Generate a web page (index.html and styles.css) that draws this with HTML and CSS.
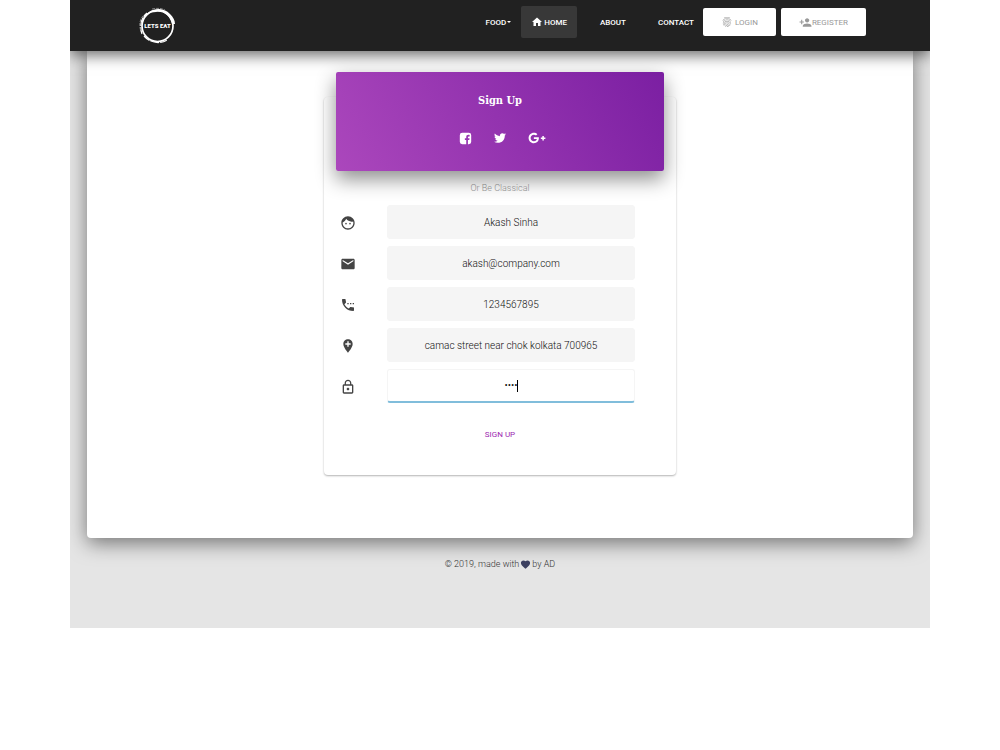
FILE: index.html
```
<!DOCTYPE html>
<html lang="en">
<head>
    <meta charset="UTF-8" />
    <meta name="viewport" content="width=device-width, initial-scale=1.0" />
    <title>Lets Eat - Sign Up</title>
    <link rel="stylesheet" href="styles.css">
</head>
<body>
    <div class="page">
        <header class="navbar">
            <a class="brand" href="#" aria-label="Lets Eat">
                <svg class="logo" viewBox="0 0 38 38">
                    <circle cx="19.500" cy="20" r="15.500" fill="none" stroke="#fff" stroke-width="1.700" />
                    <path d="M5 13C9 3 24-1 32 8c3 3 5 6 5 10h-3C32 10 26 5 18 6 11 6 8 9 5 13z" fill="#fff" />
                    <path d="M4 28C1 20 3 12 9 7M6 30c5 6 15 9 23 4" fill="none" stroke="#fff" stroke-width="1.200" stroke-dasharray="7 1 9 1" />
                    <path d="M2.500 24C1 18 2 13 5 10M14 3c5-1 9-1 13 1" fill="none" stroke="#888" stroke-width="1" stroke-dasharray="3 1" />
                    <text x="19.500" y="22" text-anchor="middle">LETS EAT</text>
                </svg>
            </a>
            <nav class="menu">
                <a class="nav-link" href="#">FOOD<span class="caret"></span></a>
                <a class="nav-link active" href="#">
                    <svg class="icon icon-sm" viewBox="0 0 24 24"><path d="M10 20v-6h4v6h5v-8h3L12 3 2 12h3v8z" /></svg>
                    HOME
                </a>
                <a class="nav-link plain" href="#">ABOUT</a>
                <a class="nav-link plain" href="#">CONTACT</a>
                <a class="nav-btn login" href="#">
                    <svg class="icon icon-sm" viewBox="0 0 24 24"><path d="M17.81 4.47c-.08 0-.16-.02-.23-.06C15.66 3.42 14 3 12.01 3c-1.98 0-3.86.47-5.57 1.41-.24.13-.54.04-.68-.2-.13-.24-.04-.55.2-.68C7.82 2.52 9.86 2 12.01 2c2.13 0 3.99.47 6.03 1.52.25.13.34.43.21.67-.09.18-.26.28-.44.28zM3.5 9.72c-.1 0-.2-.03-.29-.09-.23-.16-.28-.47-.12-.7.99-1.4 2.25-2.5 3.75-3.27C9.98 4.04 14 4.03 17.15 5.65c1.5.77 2.76 1.86 3.75 3.25.16.22.11.54-.12.7-.23.16-.54.11-.7-.12-.9-1.26-2.04-2.25-3.39-2.94-2.87-1.47-6.54-1.47-9.4.01-1.36.7-2.5 1.7-3.4 2.96-.08.14-.23.21-.39.21zm6.25 12.07c-.13 0-.26-.05-.35-.15-.87-.87-1.34-1.43-2.01-2.64-.69-1.23-1.05-2.73-1.05-4.34 0-2.97 2.54-5.39 5.66-5.39s5.66 2.42 5.66 5.39c0 .28-.22.5-.5.5s-.5-.22-.5-.5c0-2.42-2.09-4.39-4.66-4.39-2.57 0-4.66 1.97-4.66 4.39 0 1.44.32 2.77.93 3.85.64 1.15 1.08 1.64 1.85 2.42.19.2.19.51 0 .71-.11.1-.24.15-.37.15zm7.17-1.85c-1.19 0-2.24-.3-3.1-.89-1.49-1.01-2.38-2.65-2.38-4.39 0-.28.22-.5.5-.5s.5.22.5.5c0 1.41.72 2.74 1.94 3.56.71.48 1.54.71 2.54.71.24 0 .64-.03 1.04-.1.27-.05.53.13.58.41.05.27-.13.53-.41.58-.57.11-1.07.12-1.21.12zM14.91 22c-.04 0-.09-.01-.13-.02-1.59-.44-2.63-1.03-3.72-2.1-1.4-1.39-2.17-3.24-2.17-5.22 0-1.62 1.38-2.94 3.08-2.94 1.7 0 3.08 1.32 3.08 2.94 0 1.07.93 1.94 2.08 1.94s2.08-.87 2.08-1.94c0-3.77-3.25-6.83-7.25-6.83-2.84 0-5.44 1.58-6.61 4.03-.39.81-.59 1.76-.59 2.8 0 .78.07 2.01.67 3.61.1.26-.03.55-.29.64-.26.1-.55-.04-.64-.29-.49-1.31-.73-2.61-.73-3.96 0-1.2.23-2.29.68-3.24 1.33-2.79 4.28-4.6 7.51-4.6 4.55 0 8.25 3.51 8.25 7.83 0 1.62-1.38 2.94-3.08 2.94s-3.08-1.32-3.08-2.94c0-1.07-.93-1.94-2.08-1.94s-2.08.87-2.08 1.94c0 1.71.66 3.31 1.87 4.51.95.94 1.86 1.46 3.27 1.85.27.07.42.35.35.61-.05.23-.26.38-.47.38z" /></svg>
                    LOGIN
                </a>
                <a class="nav-btn register" href="#">
                    <svg class="icon icon-md" viewBox="0 0 24 24"><path d="M15 12c2.21 0 4-1.79 4-4s-1.79-4-4-4-4 1.79-4 4 1.79 4 4 4zm-9-2V7H4v3H1v2h3v3h2v-3h3v-2H6zm9 4c-2.67 0-8 1.34-8 4v2h16v-2c0-2.66-5.33-4-8-4z" /></svg>
                    REGISTER
                </a>
            </nav>
        </header>

        <main class="main">
            <form class="card">
                <div class="card-header">
                    <h4>Sign Up</h4>
                    <div class="social">
                        <a href="#" aria-label="Facebook"><svg class="icon icon-md" viewBox="0 0 16 16"><path d="M4 1h8a3 3 0 0 1 3 3v8a3 3 0 0 1-3 3h-1V9.800h1.700l.3-2.100H11V6.500c0-.7.3-1 1.100-1h1V3.600c-.3 0-.8-.1-1.500-.1-1.700 0-2.700.9-2.700 2.700v1.500H7.200v2.100h1.700V15H4a3 3 0 0 1-3-3V4a3 3 0 0 1 3-3z" /></svg></a>
                        <a href="#" aria-label="Twitter"><svg class="icon icon-sm" viewBox="0 0 512 512"><path d="M459.37 151.716c.325 4.548.325 9.097.325 13.645 0 138.72-105.583 298.558-298.558 298.558-59.452 0-114.68-17.219-161.137-47.106 8.447.974 16.568 1.299 25.34 1.299 49.055 0 94.213-16.568 130.274-44.832-46.132-.975-84.792-31.188-98.112-72.772 6.498.974 12.995 1.624 19.818 1.624 9.421 0 18.843-1.3 27.614-3.573-48.081-9.747-84.143-51.98-84.143-102.985v-1.299c13.969 7.797 30.214 12.67 47.431 13.319-28.264-18.843-46.781-51.005-46.781-87.391 0-19.492 5.197-37.36 14.294-52.954 51.655 63.675 129.3 105.258 216.365 109.807-1.624-7.797-2.599-15.918-2.599-24.04 0-57.828 46.782-104.934 104.934-104.934 30.213 0 57.502 12.67 76.67 33.137 23.715-4.548 46.456-13.32 66.599-25.34-7.798 24.366-24.366 44.833-46.132 57.827 21.117-2.273 41.584-8.122 60.426-16.243-14.292 20.791-32.161 39.308-52.628 54.253z" /></svg></a>
                        <a href="#" aria-label="Google Plus"><svg class="icon icon-wide" viewBox="0 0 640 512"><path d="M386.061 228.496c1.834 9.692 3.143 19.384 3.143 31.956C389.204 370.205 315.599 448 204.8 448c-106.084 0-192-85.915-192-192s85.916-192 192-192c51.864 0 95.083 18.859 128.611 50.292l-52.126 50.03c-14.145-13.621-39.028-29.599-76.485-29.599-65.484 0-118.92 54.221-118.92 121.277 0 67.056 53.436 121.277 118.92 121.277 75.961 0 104.513-54.745 108.965-82.773H204.8v-66.009h181.261zm185.406 6.437V179.2h-56.001v55.733h-55.733v56.001h55.733v55.733h56.001v-55.733H627.2v-56.001h-55.733z" /></svg></a>
                    </div>
                </div>
                <p class="divider">Or Be Classical</p>
                <div class="fields">
                    <div class="field">
                        <label for="name" aria-label="Name"><svg class="icon icon-lg" viewBox="0 0 24 24"><path d="M9 11.750c-.69 0-1.250.56-1.250 1.250s.56 1.250 1.250 1.250 1.250-.56 1.250-1.250-.56-1.250-1.250-1.250zm6 0c-.69 0-1.250.56-1.250 1.250s.56 1.250 1.250 1.250 1.250-.56 1.250-1.250-.56-1.250-1.250-1.250zM12 2C6.480 2 2 6.480 2 12s4.480 10 10 10 10-4.480 10-10S17.520 2 12 2zm0 18c-4.410 0-8-3.590-8-8 0-.29.02-.58.05-.86 2.360-1.050 4.230-2.980 5.210-5.370C11.070 8.330 14.050 10 17.420 10c.78 0 1.530-.09 2.250-.26.21.71.33 1.470.33 2.260 0 4.410-3.590 8-8 8z" /></svg></label>
                        <input type="text" id="name" value="Akash Sinha">
                    </div>
                    <div class="field">
                        <label for="email" aria-label="Email"><svg class="icon icon-lg" viewBox="0 0 24 24"><path d="M20 4H4c-1.100 0-1.990.9-1.990 2L2 18c0 1.100.9 2 2 2h16c1.100 0 2-.9 2-2V6c0-1.100-.9-2-2-2zm0 4l-8 5-8-5V6l8 5 8-5v2z" /></svg></label>
                        <input type="email" id="email" value="akash@company.com">
                    </div>
                    <div class="field">
                        <label for="phone" aria-label="Phone"><svg class="icon icon-lg" viewBox="0 0 24 24"><path d="M13 9h-2v2h2V9zm4 0h-2v2h2V9zm3 6.500c-1.250 0-2.450-.2-3.570-.57-.35-.11-.74-.03-1.020.24l-2.200 2.200c-2.830-1.440-5.150-3.750-6.590-6.580l2.200-2.210c.28-.27.36-.66.25-1.010C8.700 6.450 8.500 5.250 8.500 4c0-.55-.45-1-1-1H4c-.55 0-1 .45-1 1 0 9.390 7.610 17 17 17 .55 0 1-.45 1-1v-3.500c0-.55-.45-1-1-1zM19 9v2h2V9h-2z" /></svg></label>
                        <input type="tel" id="phone" value="1234567895">
                    </div>
                    <div class="field">
                        <label for="address" aria-label="Address"><svg class="icon icon-lg" viewBox="0 0 24 24"><path d="M12 2C8.140 2 5 5.140 5 9c0 5.250 7 13 7 13s7-7.750 7-13c0-3.860-3.140-7-7-7zm4 8h-3v3h-2v-3H8V8h3V5h2v3h3v2z" /></svg></label>
                        <input type="text" id="address" value="camac street near chok kolkata 700965">
                    </div>
                    <div class="field">
                        <label for="password" aria-label="Password"><svg class="icon icon-lg" viewBox="0 0 24 24"><path d="M12 17c1.100 0 2-.9 2-2s-.9-2-2-2-2 .9-2 2 .9 2 2 2zm6-9h-1V6c0-2.760-2.240-5-5-5S7 3.240 7 6v2H6c-1.100 0-2 .9-2 2v10c0 1.100.9 2 2 2h12c1.100 0 2-.9 2-2V10c0-1.100-.9-2-2-2zM8.900 6c0-1.710 1.390-3.100 3.100-3.100s3.100 1.390 3.100 3.100v2H8.900V6zM18 20H6V10h12v10z" /></svg></label>
                        <div class="password-box">
                            <input type="password" id="password" class="focused" value="1234">
                            <span class="text-cursor"></span>
                        </div>
                    </div>
                </div>
                <button type="submit" class="submit">SIGN UP</button>
            </form>
        </main>

        <footer class="footer">
            © 2019, made with
            <svg class="icon icon-heart" viewBox="0 0 24 24"><path d="M12 21.350l-1.450-1.320C5.400 15.360 2 12.280 2 8.500 2 5.420 4.420 3 7.500 3c1.740 0 3.410.81 4.500 2.090C13.090 3.810 14.760 3 16.500 3 19.580 3 22 5.420 22 8.500c0 3.780-3.400 6.860-8.550 11.540L12 21.350z" /></svg>
            by AD
        </footer>
    </div>
</body>
</html>
```
FILE: styles.css
```
* {
    box-sizing: border-box;
}
body {
    margin: 0;
    background: #fff;
    font-family: Roboto, "Liberation Sans", sans-serif;
    font-size: 10px;
    font-weight: 300;
    color: #333;
}
a {
    color: inherit;
    text-decoration: none;
}
.page {
    width: 86%;
    margin: 0 auto;
    background: #e5e5e5;
    overflow: hidden;
}
.icon {
    display: block;
    flex: none;
    fill: currentColor;
}
.icon-sm { width: 12px; height: 12px; }
.icon-md { width: 13px; height: 13px; }
.icon-lg { width: 16px; height: 16px; }
.icon-wide { width: 18px; height: 14px; }
.icon-heart { width: 11px; height: 11px; color: #3c4060; }

/* navbar */
.navbar {
    position: relative;
    z-index: 1;
    display: flex;
    justify-content: space-between;
    padding: 6px 64px 7px 68px;
    background: #212121;
    color: #fff;
    box-shadow: 0 4px 14px rgba(0, 0, 0, 0.6);
}
.logo {
    display: block;
    width: 38px;
    height: 38px;
}
.logo text {
    fill: #fff;
    font-family: Roboto, sans-serif;
    font-size: 6px;
    font-weight: 900;
}
.menu {
    display: flex;
    align-items: flex-start;
    font-size: 8px;
    font-weight: 500;
}
.nav-link {
    display: flex;
    align-items: center;
    gap: 1px;
    height: 32px;
    padding: 0 10px;
    border-radius: 2px;
}
.nav-link.active {
    background: #383838;
}
.nav-link.plain {
    padding: 0 9px 0 23px;
}
.caret {
    border: 2px solid transparent;
    border-top-color: #fff;
    border-bottom: 0;
}
.nav-btn {
    display: flex;
    align-items: center;
    height: 28px;
    margin-top: 2px;
    padding: 0 18px;
    border-radius: 2px;
    background: #fff;
    color: #999;
    font-weight: 400;
}
.nav-btn.login {
    gap: 2px;
}
.nav-btn.register {
    margin-left: 5px;
}

/* sign up card */
.main {
    margin: 0 17px;
    padding: 46px 16px 63px;
    background: #fff;
    border-radius: 0 0 4px 4px;
    box-shadow: 0 5px 20px rgba(0, 0, 0, 0.5);
}
.card {
    width: 352px;
    max-width: 100%;
    margin: 0 auto;
    padding: 0 12px 30px;
    border-radius: 4px;
    background: #fff;
    box-shadow: 0 1px 2px rgba(0, 0, 0, 0.3);
    text-align: center;
}
.card-header {
    position: relative;
    top: -25px;
    height: 99px;
    margin-bottom: -25px;
    padding-top: 21px;
    border-radius: 2px;
    background: linear-gradient(60deg, #ab47bc, #7b1fa2);
    box-shadow: 0 8px 20px rgba(0, 0, 0, 0.45);
    color: #fff;
}
.card-header h4 {
    margin: 0;
    font-family: "Roboto Slab", "DejaVu Serif Condensed", "DejaVu Serif", serif;
    font-size: 11px;
    line-height: 15px;
    font-weight: 700;
}
.social {
    display: flex;
    justify-content: center;
    align-items: center;
    gap: 22px;
    margin-top: 23px;
    padding-left: 4px;
}
.divider {
    margin: 0;
    padding: 11px 0;
    font-size: 9px;
    line-height: 12px;
    color: #999;
}
.fields {
    display: grid;
    gap: 7px;
    padding: 0 29px 0 4px;
}
.field {
    display: flex;
    align-items: center;
    gap: 31px;
    color: #444;
}
.field label {
    padding-top: 2px;
}
.field input {
    flex: 1;
    min-width: 0;
    height: 34px;
    padding: 0 8px;
    border: 1px solid #f5f5f5;
    border-radius: 3px;
    background: #f5f5f5;
    color: #111;
    font: inherit;
    text-align: center;
    outline: none;
}
.field input.focused,
.field input:focus {
    background: #fff;
    border-bottom: 2px solid #80bddb;
}
.password-box {
    position: relative;
    display: flex;
    flex: 1;
}
.text-cursor {
    position: absolute;
    top: 11px;
    left: calc(50% + 6px);
    width: 1px;
    height: 12px;
    background: #000;
}
.submit {
    margin-top: 22px;
    padding: 5px 10px;
    border: 0;
    background: none;
    color: #9c27b0;
    font-family: inherit;
    font-size: 8px;
    line-height: 10px;
    font-weight: 400;
    cursor: pointer;
}
.footer {
    display: flex;
    justify-content: center;
    align-items: center;
    gap: 1px;
    height: 90px;
    padding-bottom: 38px;
    font-size: 9px;
}
```
